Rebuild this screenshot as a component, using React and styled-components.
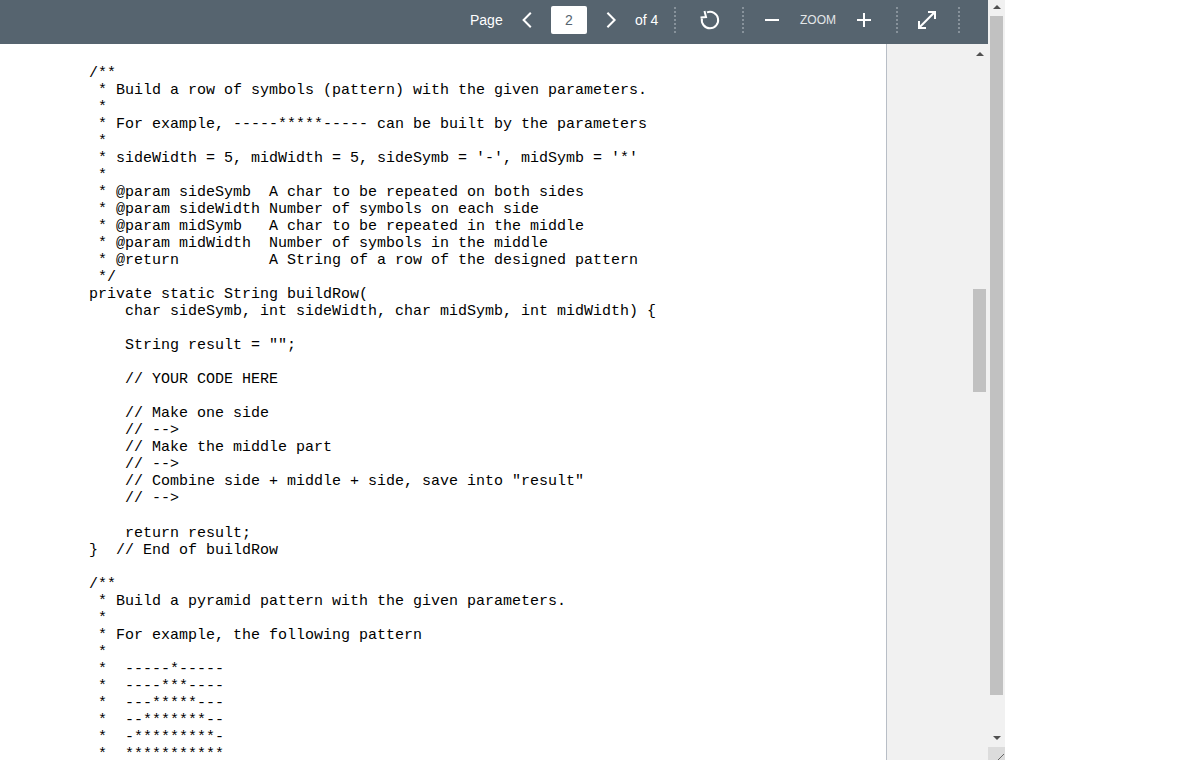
import React from "react";
import styled, { createGlobalStyle } from "styled-components";

const HEAD_CODE = `/**
 * Build a row of symbols (pattern) with the given parameters.
 *
 * For example, -----*****----- can be built by the parameters
 *
 * sideWidth = 5, midWidth = 5, sideSymb = '-', midSymb = '*'
 *
 * @param sideSymb  A char to be repeated on both sides
 * @param sideWidth Number of symbols on each side
 * @param midSymb   A char to be repeated in the middle
 * @param midWidth  Number of symbols in the middle
 * @return          A String of a row of the designed pattern
 */
private static String buildRow(
    char sideSymb, int sideWidth, char midSymb, int midWidth) {

    String result = "";

    // YOUR CODE HERE

    // Make one side
    // -->
    // Make the middle part
    // -->
    // Combine side + middle + side, save into "result"
    // -->
`;

const TAIL_CODE = `
    return result;
}  // End of buildRow

/**
 * Build a pyramid pattern with the given parameters.
 *
 * For example, the following pattern
 *
 *  -----*-----
 *  ----***----
 *  ---*****---
 *  --*******--
 *  -*********-
 *  ***********`;

const GlobalStyle = createGlobalStyle`
  html, body {
    margin: 0;
    padding: 0;
    height: 100%;
    overflow: hidden;
    background: #fff;
  }
`;

const Shell = styled.div`
  display: flex;
  width: 1177px;
  height: 760px;
  overflow: hidden;
`;

const Viewer = styled.div`
  display: flex;
  flex-direction: column;
  width: 988px;
  height: 760px;
`;

const Toolbar = styled.div`
  display: flex;
  align-items: center;
  flex: none;
  height: 44px;
  padding: 0 0 4px 470px;
  box-sizing: border-box;
  background: #56646f;
  color: #fff;
  font-family: "Liberation Sans", Arial, sans-serif;
  font-size: 14px;
`;

const Label = styled.span`
  display: block;
  flex: none;
  width: ${(p) => p.$width}px;
  margin-left: ${(p) => p.$left || 0}px;
  color: ${(p) => p.$color || "#fff"};
  font-size: ${(p) => p.$size || 14}px;
  line-height: 16px;
  white-space: nowrap;
`;

const PageInput = styled.div`
  flex: none;
  width: 36px;
  height: 28px;
  margin-left: 18px;
  border-radius: 2px;
  background: #fff;
  color: #56646f;
  font-size: 14px;
  line-height: 29px;
  text-align: center;
`;

const Divider = styled.div`
  flex: none;
  width: 0;
  height: 26px;
  margin-left: ${(p) => p.$left}px;
  border-left: 2px dotted #87929b;
`;

const Icon = styled.svg`
  display: block;
  flex: none;
  margin-left: ${(p) => p.$left}px;
  fill: none;
  stroke: #fff;
  stroke-width: 2;
`;

const Body = styled.div`
  display: flex;
  flex: 1;
  min-height: 0;
`;

const Page = styled.div`
  flex: none;
  width: 886px;
  padding: 21px 0 0 89px;
  box-sizing: border-box;
  background: #fff;
`;

const CodeBlock = styled.pre`
  margin: ${(p) => p.$top || 0}px 0 0;
  color: #000;
  font-family: "Liberation Mono", "Courier New", monospace;
  font-size: 15px;
  line-height: 17px;
`;

const SidePanel = styled.div`
  display: flex;
  flex: 1;
  flex-direction: column;
  align-items: flex-end;
  border-left: 1px solid #b8bec6;
  background: #f1f1f1;
`;

const ArrowUp = styled.div`
  flex: none;
  width: 0;
  height: 0;
  border-left: 4px solid transparent;
  border-right: 4px solid transparent;
  border-bottom: 4px solid #505050;
`;

const ArrowDown = styled(ArrowUp)`
  border-bottom: 0;
  border-top: 4px solid #505050;
`;

const InnerTrack = styled.div`
  display: flex;
  flex-direction: column;
  align-items: center;
  width: 13px;
  margin-right: 2px;
  padding-top: 8px;
`;

const InnerThumb = styled.div`
  width: 13px;
  height: 103px;
  margin-top: 233px;
  background: #c1c1c1;
`;

const OuterBar = styled.div`
  display: flex;
  flex: none;
  flex-direction: column;
  align-items: center;
  width: 17px;
  height: 760px;
  background: #f1f1f1;
`;

const OuterUp = styled(ArrowUp)`
  margin-top: 5px;
`;

const OuterThumb = styled.div`
  flex: none;
  width: 13px;
  height: 679px;
  margin-top: 7px;
  background: #c1c1c1;
`;

const OuterDown = styled(ArrowDown)`
  margin-top: 41px;
`;

const Resizer = styled.div`
  flex: none;
  width: 17px;
  height: 13px;
  margin-top: 7px;
  background: #dcdcdc;
`;

const Grip = styled.svg`
  display: block;
  margin-left: auto;
  stroke: #666;
  stroke-width: 1;
`;

export default function App() {
  return (
    <Shell>
      <GlobalStyle />
      <Viewer>
        <Toolbar>
          <Label $width={33}>Page</Label>
          <Icon $left={18} width="12" height="18" viewBox="0 0 12 18">
            <path d="M9.800 1.800 2.600 9l7.200 7.200" />
          </Icon>
          <PageInput>2</PageInput>
          <Icon $left={18} width="12" height="18" viewBox="0 0 12 18">
            <path d="M2.400 1.800 9.600 9l-7.200 7.200" />
          </Icon>
          <Label $left={18} $width={23}>of 4</Label>
          <Divider $left={16} />
          <Icon $left={23} width="22" height="22" viewBox="0 0 22 22">
            <path d="M8 3.400a8.200 8.200 0 1 1-5.100 6.100" />
            <path d="M5.500 2 7 8l-5.500.5" />
          </Icon>
          <Divider $left={21} />
          <Icon $left={20} width="16" height="16" viewBox="0 0 16 16">
            <path d="M1 8h14" />
          </Icon>
          <Label $left={20} $width={36} $size={12} $color="#e4e7e9">ZOOM</Label>
          <Icon $left={20} width="16" height="16" viewBox="0 0 16 16">
            <path d="M1 8h14M8 1v14" />
          </Icon>
          <Divider $left={24} />
          <Icon $left={19} width="20" height="20" viewBox="0 0 20 20">
            <path d="M1.800 18 17.800 2M11 2h7v7M2 11v7h7" />
          </Icon>
          <Divider $left={21} />
        </Toolbar>
        <Body>
          <Page>
            <CodeBlock>{HEAD_CODE}</CodeBlock>
            <CodeBlock $top={1}>{TAIL_CODE}</CodeBlock>
          </Page>
          <SidePanel>
            <InnerTrack>
              <ArrowUp />
              <InnerThumb />
            </InnerTrack>
          </SidePanel>
        </Body>
      </Viewer>
      <OuterBar>
        <OuterUp />
        <OuterThumb />
        <OuterDown />
        <Resizer>
          <Grip width="9" height="13" viewBox="0 0 9 13">
            <path d="M2 13 8 7" />
          </Grip>
        </Resizer>
      </OuterBar>
    </Shell>
  );
}
